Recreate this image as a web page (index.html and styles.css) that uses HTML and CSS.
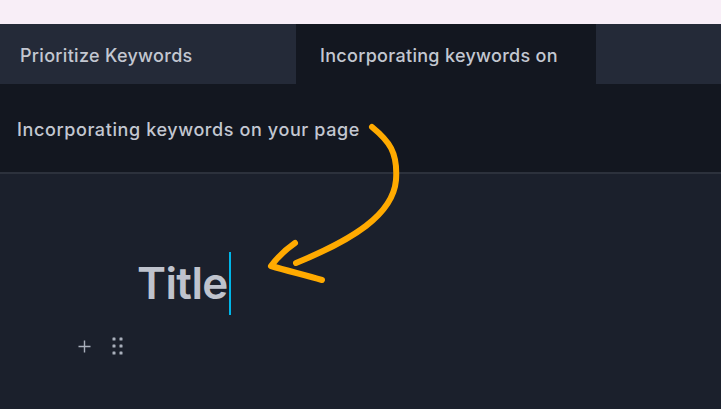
FILE: index.html
```html
<!DOCTYPE html>
<html lang='en'>
<head>
    <meta charset='UTF-8'>
    <meta name='viewport' content='width=device-width, initial-scale=1.0'>
    <title>Incorporating keywords on your page</title>
    <link rel="stylesheet" href="styles.css">
</head>
<body>
    <div class='topbar'></div>
    <nav class='tabs'>
        <div class='tab'>Prioritize Keywords</div>
        <div class='tab active'>Incorporating keywords on</div>
    </nav>
    <header class='page-header'>
        <h1>Incorporating keywords on your page</h1>
    </header>
    <main class='editor'>
        <div class='title-row'>
            <span class='title-text'>Title</span><span class='caret'></span>
        </div>
        <div class='block-tools'>
            <svg class='tool-plus' width='13' height='13' viewBox='0 0 13 13'>
                <path d='M6.5 0.5v12M0.5 6.5h12' stroke='#aab0bc' stroke-width='1.4' fill='none'/>
            </svg>
            <svg class='tool-drag' width='11' height='18' viewBox='0 0 11 18'>
                <rect x='0.5' y='0.5' width='3' height='3' rx='0.6' fill='#aab0bc'/>
                <rect x='7.5' y='0.5' width='3' height='3' rx='0.6' fill='#aab0bc'/>
                <rect x='0.5' y='7.5' width='3' height='3' rx='0.6' fill='#aab0bc'/>
                <rect x='7.5' y='7.5' width='3' height='3' rx='0.6' fill='#aab0bc'/>
                <rect x='0.5' y='14.5' width='3' height='3' rx='0.6' fill='#aab0bc'/>
                <rect x='7.5' y='14.5' width='3' height='3' rx='0.6' fill='#aab0bc'/>
            </svg>
        </div>
    </main>
    <svg class='annotation' width='721' height='409' viewBox='0 0 721 409'>
        <g stroke='#ffaa00' stroke-width='6' stroke-linecap='round' stroke-linejoin='round' fill='none'>
            <path d='M372 127 C389 141 398 152 396 180 C393 215 352 240 296 263'/>
            <path d='M295 243 C285 250 277 258 271 266 C288 271 305 275 322 280'/>
        </g>
    </svg>
</body>
</html>
```

FILE: styles.css
```css
body { margin: 0; padding: 0; background-color: #1b202c; font-family: Inter, "Noto Sans", sans-serif; color: #c3c7d1; overflow: hidden; }
.topbar { height: 24px; background: #f8eef7; }
.tabs { display: flex; height: 60px; background: #242a38; }
.tab { display: flex; align-items: center; width: 276px; padding-left: 20px; padding-top: 2px; font-size: 18px; font-weight: 500; letter-spacing: 0.3px; color: #c3c7d1; }
.tab.active { width: 276px; padding-left: 24px; background: #131720; }
.page-header { display: flex; align-items: center; height: 90px; padding-left: 17px; padding-top: 2px; box-sizing: border-box; background: #131720; border-bottom: 2px solid #2c313c; }
.page-header h1 { margin: 0; font-size: 18px; font-weight: 500; letter-spacing: 0.6px; color: #c3c7d1; }
.editor { padding-top: 78px; }
.title-row { display: flex; align-items: center; height: 63px; padding-left: 137px; }
.title-text { font-size: 44px; font-weight: 600; color: #bfc3cd; letter-spacing: -0.6px; line-height: 63px; }
.caret { width: 2px; height: 63px; margin-left: 1px; background: #00b5e8; }
.block-tools { display: flex; align-items: center; gap: 21px; margin-top: 22px; padding-left: 78px; }
.annotation { position: absolute; left: 0; top: 0; pointer-events: none; }
```
